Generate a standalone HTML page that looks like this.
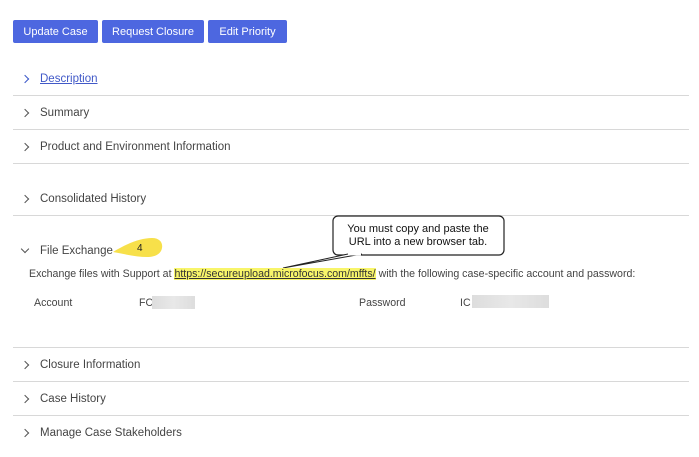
<!DOCTYPE html>
<html><head><style>
body{margin:0;width:699px;height:457px;background:#fff;font-family:"Liberation Sans",sans-serif;position:relative;overflow:hidden;color:#444}
.btn{position:absolute;top:20px;height:23px;background:#4d67e0;color:#fff;font-size:11px;line-height:24px;text-align:center;border-radius:2px}
.ln{position:absolute;left:13px;width:676px;height:1px;background:#d8d8d8}
.row{position:absolute;left:40px;font-size:11.5px;color:#444}
.chev{position:absolute;left:22px;width:5px;height:5px;border-right:1.3px solid #555;border-top:1.3px solid #555;transform:rotate(45deg)}
.t{position:absolute;font-size:10.6px;color:#444}
.blur{position:absolute;height:13px;background:linear-gradient(90deg,#ddd,#e8e8e8,#ddd)}
</style></head><body>
<div class="btn" style="left:13px;width:85px">Update Case</div>
<div class="btn" style="left:102px;width:102px">Request Closure</div>
<div class="btn" style="left:208px;width:79px">Edit Priority</div>

<div class="chev" style="top:76px;border-color:#3a56c8"></div>
<div class="row" style="top:73px;color:#4159c8;text-decoration:underline">Description</div>
<div class="ln" style="top:95px"></div>
<div class="chev" style="top:110px"></div><div class="row" style="top:107px">Summary</div>
<div class="ln" style="top:129px"></div>
<div class="chev" style="top:144px"></div><div class="row" style="top:141px">Product and Environment Information</div>
<div class="ln" style="top:163px"></div>
<div class="chev" style="top:196px"></div><div class="row" style="top:193px">Consolidated History</div>
<div class="ln" style="top:215px"></div>

<div class="chev" style="top:246px;transform:rotate(135deg)"></div><div class="row" style="top:245px">File Exchange</div>
<svg style="position:absolute;left:0;top:0" width="699" height="457">
<path d="M113 252 C126 244,140 238,152 238 C160 238,163 243,162 248 C161 254,155 257,147 257 C136 257,124 254,113 252Z" fill="#f7e04a"/>
<text x="137" y="251" font-size="10" font-family="Liberation Sans" fill="#222">4</text>
<rect x="333" y="216" width="171" height="39" rx="5" fill="#fff" stroke="#222" stroke-width="1.2"/>
<path d="M348 254 L283 268 L362 254" fill="#fff" stroke="#222" stroke-width="1"/>
<line x1="349" y1="254.5" x2="361" y2="254.5" stroke="#fff" stroke-width="2"/>
<text x="418" y="232" font-size="11" text-anchor="middle" font-family="Liberation Sans" fill="#111">You must copy and paste the</text>
<text x="418" y="245" font-size="11" text-anchor="middle" font-family="Liberation Sans" fill="#111">URL into a new browser tab.</text>
</svg>
<div class="t" style="left:29px;top:268px">Exchange files with Support at <span style="background:#f8f56a;color:#333;text-decoration:underline">https://secureupload.microfocus.com/mffts/</span> with the following case-specific account and password:</div>
<div class="t" style="left:34px;top:297px">Account</div>
<div class="t" style="left:139px;top:297px">FC</div><div class="blur" style="left:152px;top:296px;width:43px"></div>
<div class="t" style="left:359px;top:297px">Password</div>
<div class="t" style="left:460px;top:297px">IC</div><div class="blur" style="left:472px;top:295px;width:77px"></div>
<div class="ln" style="top:347px"></div>
<div class="chev" style="top:362px"></div><div class="row" style="top:359px">Closure Information</div>
<div class="ln" style="top:381px"></div>
<div class="chev" style="top:396px"></div><div class="row" style="top:393px">Case History</div>
<div class="ln" style="top:415px"></div>
<div class="chev" style="top:430px"></div><div class="row" style="top:427px">Manage Case Stakeholders</div>
</body></html>
